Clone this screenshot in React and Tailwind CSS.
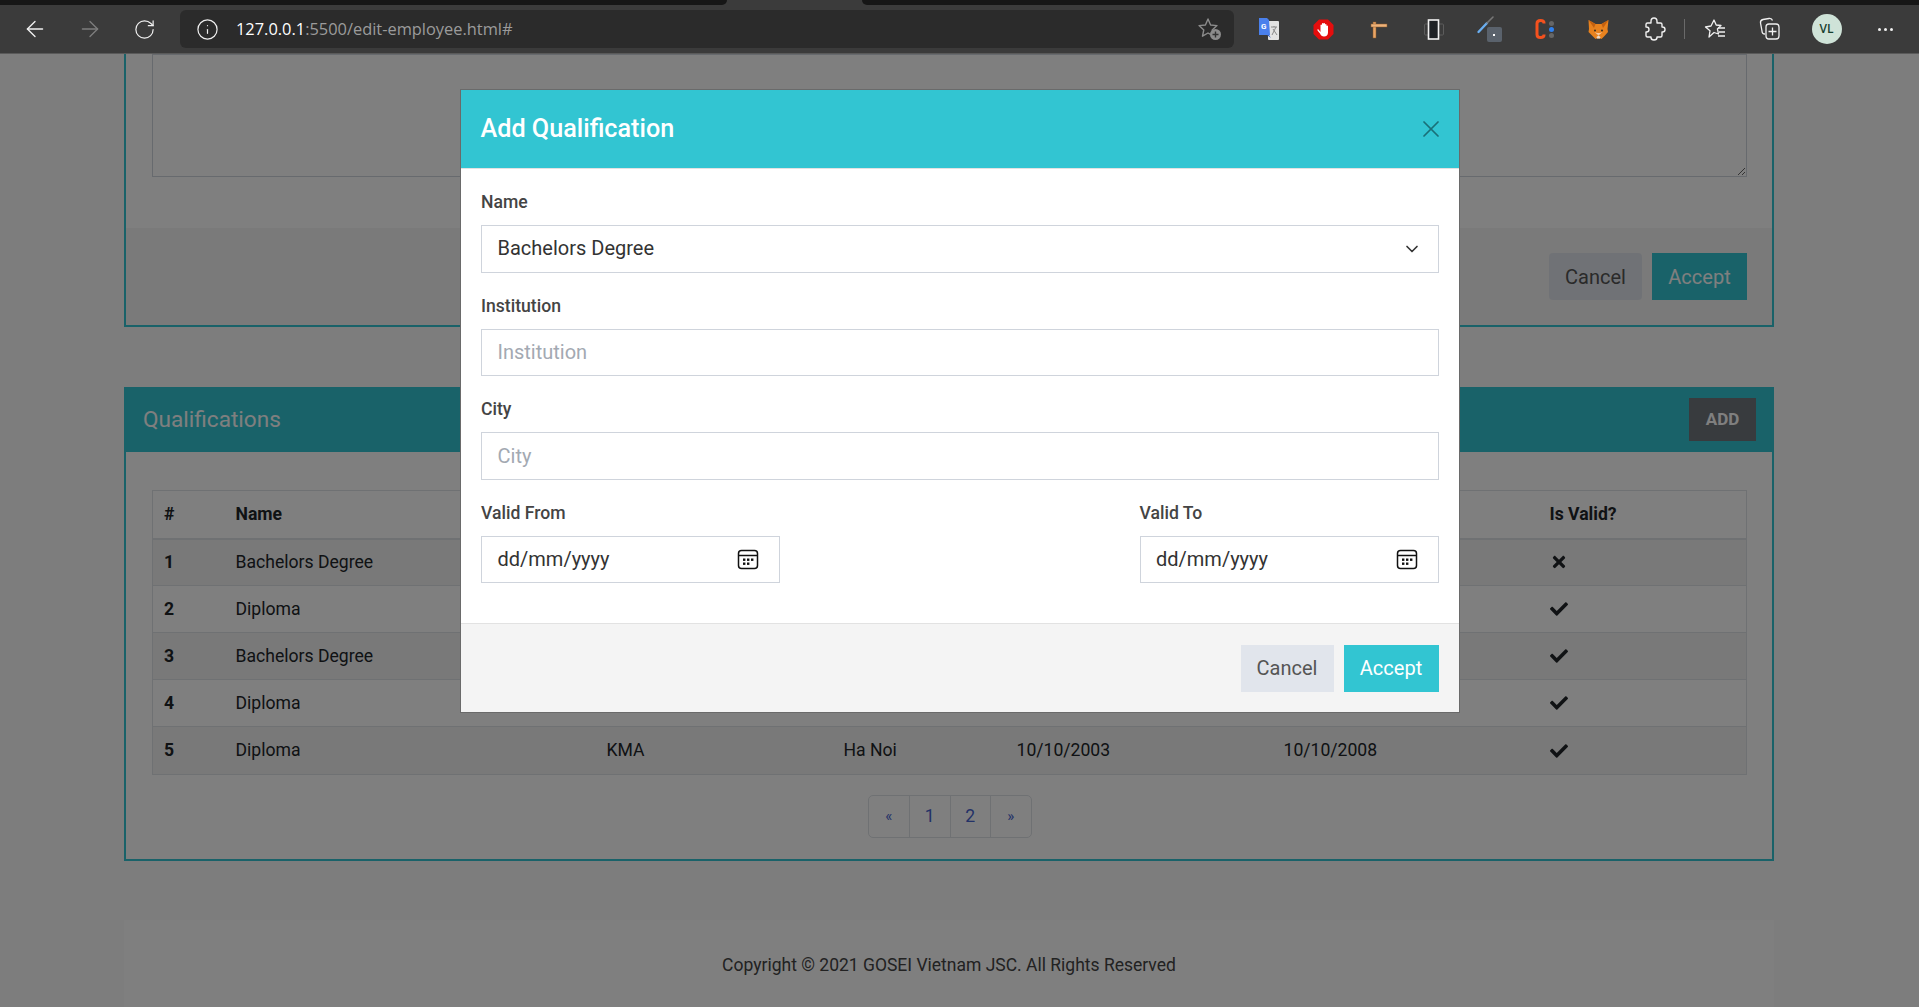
import React from 'react';
import { ArrowLeft, ArrowRight, ChevronDown, Info, RotateCw, X } from 'lucide-react';
import { FaCheck, FaTimes } from 'react-icons/fa';

// only the cells the dialog does not cover are filled in
const rows = [
  { id: 1, name: 'Bachelors Degree', valid: false },
  { id: 2, name: 'Diploma', valid: true },
  { id: 3, name: 'Bachelors Degree', valid: true },
  { id: 4, name: 'Diploma', valid: true },
  { id: 5, name: 'Diploma', inst: 'KMA', city: 'Ha Noi', from: '10/10/2003', to: '10/10/2008', valid: true },
];

function StarAdd() {
  return (
    <svg width="26" height="26" viewBox="0 0 26 26" fill="none" stroke="#8c8c8c" strokeWidth="1.4">
      <path d="M11 3l2.6 6 6.4.6-4.8 4.3 1.3 6.3L11 17l-5.5 3.2 1.3-6.3L2 9.6 8.4 9z" strokeLinejoin="round" />
      <circle cx="18.5" cy="18.5" r="5.5" fill="#8c8c8c" stroke="none" />
      <path d="M18.5 15.5v6M15.5 18.5h6" stroke="#333" strokeWidth="1.4" />
    </svg>
  );
}

function TranslateIcon() {
  return (
    <svg width="22" height="24" viewBox="0 0 22 24">
      <rect x="10" y="4" width="11" height="19" rx="1" fill="#e3e3e3" />
      <path d="M13 10h6M16 9v1M14 18l4-8M15 12l4 6" stroke="#8a8a8a" strokeWidth="1" fill="none" />
      <path d="M1 1h8l2 2 1 15H1z" fill="#4a80ec" />
      <path d="M11 18l2 3-4-3z" fill="#2d5cc0" />
      <text x="3" y="12" fontSize="8" fontWeight="700" fill="#fff" fontFamily="Roboto, sans-serif">G</text>
    </svg>
  );
}

function StopIcon() {
  return (
    <svg width="21" height="21" viewBox="0 0 21 21">
      <path d="M6 0.5h9l5.500 5.500v9L15 20.500H6L0.500 15V6z" fill="#e50d0d" />
      <path d="M5.500 10.500l2 2.500V6a.8.8 0 0 1 1.500 0V4.500a.8.8 0 0 1 1.500 0 .8.8 0 0 1 1.500 0V5.500a.8.8 0 0 1 1.500 0V7a.8.8 0 0 1 1.500 0v6.500c0 2.500-1.500 4-4 4-2 0-3.200-1-4-3L4.500 11.500c-.4-1 .5-1.600 1-1z" fill="#fff" />
    </svg>
  );
}

function SignIcon() {
  return (
    <svg width="18" height="20" viewBox="0 0 18 20">
      <rect x="3" y="3" width="3" height="16" fill="#e9a566" stroke="#8a5a2b" strokeWidth="0.5" />
      <rect x="1" y="5" width="16" height="3" fill="#eeb27a" stroke="#8a5a2b" strokeWidth="0.5" />
    </svg>
  );
}

function PhoneIcon() {
  return (
    <svg width="20" height="21" viewBox="0 0 20 21" fill="none">
      <rect x="0.500" y="5" width="19" height="11" rx="1" stroke="#5c5c5c" />
      <rect x="4.500" y="1" width="10" height="19" fill="#1e2125" stroke="#f2f2f2" strokeWidth="1.600" />
    </svg>
  );
}

function DropperIcon() {
  return (
    <div className="relative w-[28px] h-[28px]">
      <svg width="20" height="20" viewBox="0 0 20 20" className="absolute left-[1px] top-0">
        <path d="M2.500 17L11 8" stroke="#6aaef0" strokeWidth="2.400" strokeLinecap="round" />
        <path d="M11 8l6-6" stroke="#777" strokeWidth="1.600" strokeLinecap="round" />
      </svg>
      <div className="absolute left-[12px] top-[12px] w-[15px] h-[15px] rounded-[2px] bg-[#5a626c] flex items-center justify-center">
        <div className="w-[2px] h-[2px] bg-white" />
      </div>
    </div>
  );
}

function ColorPickIcon() {
  return (
    <div className="flex items-center gap-[3px]">
      <svg width="12" height="22" viewBox="0 0 12 22" fill="none">
        <path d="M10 5.500V5C10 3.300 8.700 2.500 6.500 2.500S3 3.500 3 5.500v11c0 2 1.200 3 3.500 3s3.500-.8 3.500-2.500v-.5" stroke="#f4511e" strokeWidth="3" />
      </svg>
      <div className="flex flex-col gap-[1px]">
        <div className="w-[5px] h-[5px] rounded-full bg-[#666]" />
        <div className="w-[5px] h-[5px] rounded-full bg-[#2f80ed]" />
        <div className="w-[5px] h-[5px] rounded-full bg-[#666]" />
      </div>
    </div>
  );
}

function FoxIcon() {
  return (
    <svg width="21" height="21" viewBox="0 0 21 21">
      <path d="M.5 1l7 4h6l7-4-1 9 .5 3-3.500 4-3 3-1-.5h-4l-1 .5-3-3L.5 13l.5-3z" fill="#e8821e" />
      <path d="M.5 1l7 4-1.500 4zM20.500 1l-7 4 1.500 4z" fill="#c4600f" />
      <path d="M6.500 13l4 3.500 4-3.500-2.500 1H9z" fill="#f6c9a0" />
      <path d="M8.500 18l2-1.500 2 1.500-.5 1.500H9z" fill="#e8d8c8" />
      <circle cx="7" cy="11.500" r="0.900" fill="#222" />
      <circle cx="14" cy="11.500" r="0.900" fill="#222" />
    </svg>
  );
}

function ExtensionsIcon() {
  return (
    <svg width="24" height="26" viewBox="0 0 24 26" fill="none" stroke="#f0f0f0" strokeWidth="1.400" strokeLinejoin="round">
      <path d="M9 5.500C9 3.500 10.200 2 12 2s3 1.500 3 3.500V7h3.500c.8 0 1.500.7 1.500 1.500V11h.5c1.500 0 2.500 1 2.500 2.500S22 16 20.500 16H20v3.500c0 .8-.7 1.500-1.500 1.500H15v.5c0 1.500-1.200 2.500-3 2.500s-3-1-3-2.500V21H5.500C4.700 21 4 20.300 4 19.500V16h.5C6 16 7 15 7 13.500S6 11 4.500 11H4V8.500C4 7.700 4.700 7 5.500 7H9z" />
    </svg>
  );
}

function FavoritesIcon() {
  return (
    <svg width="22" height="22" viewBox="0 0 22 22" fill="none" stroke="#f0f0f0" strokeWidth="1.300" strokeLinejoin="round">
      <path d="M10 2l2.200 5 4.800.5-3.600 3.400 1.100 5.100L10 14.500 5 19l1-6.200L1.500 9l5.500-1z" />
      <path d="M14 10h7M15 14h6M14 18h7" />
    </svg>
  );
}

function CollectionsIcon() {
  return (
    <svg width="22" height="24" viewBox="0 0 22 24" fill="none" stroke="#f0f0f0" strokeWidth="1.300">
      <path d="M6 17c-2 0-3-1-3-3L1.500 6c-.3-2 .7-3 2.500-3.500L10 1.500c2-.3 3 .5 3.500 2" />
      <rect x="7" y="7" width="13" height="15" rx="3" />
      <path d="M13.500 10.500v8M9.500 14.500h8" />
    </svg>
  );
}

function CalendarIcon() {
  return (
    <svg width="22" height="22" viewBox="0 0 22 22" fill="none" stroke="#111" strokeWidth="1.500">
      <rect x="1.500" y="2.500" width="19" height="18" rx="3" />
      <path d="M1.500 7.500h19" />
      <g fill="#111" stroke="none">
        <rect x="6" y="10.500" width="2.400" height="2.400" />
        <rect x="10" y="10.500" width="2.400" height="2.400" />
        <rect x="14" y="10.500" width="2.400" height="2.400" />
        <rect x="6" y="14.500" width="2.400" height="2.400" />
        <rect x="10" y="14.500" width="2.400" height="2.400" />
      </g>
    </svg>
  );
}

function ToolbarSlot({ children, className = 'w-[55px]' }) {
  return <div className={`flex items-center justify-center ${className}`}>{children}</div>;
}

function BrowserBar() {
  return (
    <div className="h-[54px] shrink-0 bg-[#3b3b3b] border-b border-[#5a5a5a] relative z-10">
      <div className="flex h-[5px]">
        <div className="w-[727px] bg-[#161616] rounded-br-md" />
        <div className="w-[135px]" />
        <div className="flex-1 bg-[#161616] rounded-bl-md" />
      </div>
      <div className="flex items-center h-[48px] pl-[7px]">
        <ToolbarSlot><ArrowLeft size={26} strokeWidth={1.25} color="#f0f0f0" /></ToolbarSlot>
        <ToolbarSlot><ArrowRight size={26} strokeWidth={1.25} color="#7d7d7d" /></ToolbarSlot>
        <ToolbarSlot><RotateCw size={23} strokeWidth={1.25} color="#f0f0f0" /></ToolbarSlot>
        <div className="ml-[8px] w-[1054px] h-[38px] bg-[#2b2b2b] rounded-md flex items-center pl-[16px] pr-[11px] font-['Open_Sans',sans-serif] text-[16.4px]">
          <Info size={23} strokeWidth={1.25} color="#f0f0f0" />
          <span className="ml-[17px] text-white">127.0.0.1</span>
          <span className="text-[#9b9b9b]">:5500/edit-employee.html#</span>
          <div className="ml-auto"><StarAdd /></div>
        </div>
        <div className="flex items-center ml-[7px]">
          <ToolbarSlot><TranslateIcon /></ToolbarSlot>
          <ToolbarSlot><StopIcon /></ToolbarSlot>
          <ToolbarSlot><SignIcon /></ToolbarSlot>
          <ToolbarSlot><PhoneIcon /></ToolbarSlot>
          <ToolbarSlot><DropperIcon /></ToolbarSlot>
          <ToolbarSlot><ColorPickIcon /></ToolbarSlot>
          <ToolbarSlot><FoxIcon /></ToolbarSlot>
          <ToolbarSlot><ExtensionsIcon /></ToolbarSlot>
          <div className="w-px h-[20px] bg-[#6a6a6a] ml-[3px]" />
          <ToolbarSlot className="w-[59px]"><FavoritesIcon /></ToolbarSlot>
          <ToolbarSlot className="w-[52px]"><CollectionsIcon /></ToolbarSlot>
          <ToolbarSlot className="w-[61px]">
            <div className="w-[30px] h-[30px] rounded-full bg-[#cfe3d8] flex items-center justify-center font-['Open_Sans',sans-serif] text-[12px] font-semibold text-[#17402f]">VL</div>
          </ToolbarSlot>
          <ToolbarSlot className="w-[56px]">
            <div className="flex gap-[3px]">
              <div className="w-[3px] h-[3px] rounded-full bg-[#f0f0f0]" />
              <div className="w-[3px] h-[3px] rounded-full bg-[#f0f0f0]" />
              <div className="w-[3px] h-[3px] rounded-full bg-[#f0f0f0]" />
            </div>
          </ToolbarSlot>
        </div>
      </div>
    </div>
  );
}

function QualificationsTable() {
  return (
    <table className="w-full table-fixed border border-[#dee2e6] border-collapse text-[#212529]">
      <colgroup>
        <col className="w-[72px]" />
        <col className="w-[370px]" />
        <col className="w-[238px]" />
        <col className="w-[172px]" />
        <col className="w-[267px]" />
        <col className="w-[266px]" />
        <col />
      </colgroup>
      <thead>
        <tr className="h-[48px] border-b-2 border-[#dee2e6] text-left">
          <th className="pl-[11px] font-bold">#</th>
          <th className="pl-[11px] font-bold">Name</th>
          <th />
          <th />
          <th />
          <th />
          <th className="pl-[12px] font-bold">Is Valid?</th>
        </tr>
      </thead>
      <tbody>
        {rows.map((r) => (
          <tr key={r.id} className={`border-t border-[#dee2e6] ${r.id === 5 ? 'h-[48px]' : 'h-[47px]'} ${r.id % 2 === 1 ? 'bg-[#f2f2f2]' : ''}`}>
            <td className="pl-[11px] font-bold">{r.id}</td>
            <td className="pl-[11px]">{r.name}</td>
            <td className="pl-[12px]">{r.inst}</td>
            <td className="pl-[11px]">{r.city}</td>
            <td className="pl-[12px]">{r.from}</td>
            <td className="pl-[12px]">{r.to}</td>
            <td className="pl-[12px]">{r.valid ? <FaCheck size={18} /> : <FaTimes size={18} />}</td>
          </tr>
        ))}
      </tbody>
    </table>
  );
}

function Pagination() {
  const items = ['«', '1', '2', '»'];
  return (
    <div className="flex justify-center mt-[20px]">
      <div className="flex h-[43px] border border-[#dee2e6] rounded-[5px] text-[#4664cf]">
        {items.map((t, i) => (
          <div key={t} className={`w-[40.5px] flex items-center justify-center ${i > 0 ? 'border-l border-[#dee2e6]' : ''} ${i === 0 || i === 3 ? 'text-[15px]' : ''}`}>
            {t}
          </div>
        ))}
      </div>
    </div>
  );
}

function Field({ label, children }) {
  return (
    <div className="mb-[20px]">
      <div className="h-[26px] leading-[26px] mb-[10px] font-medium text-[#444]">{label}</div>
      {children}
    </div>
  );
}

const boxClass = 'w-full h-[47.5px] border border-[#cfd4dc] bg-white pl-[15.5px] pr-[16px] text-[20px] text-[#333] outline-none placeholder:text-[#a3a9b2]';

function DateBox() {
  return (
    <div className={`${boxClass} flex items-center justify-between pr-[20px]`}>
      <span>dd/mm/yyyy</span>
      <CalendarIcon />
    </div>
  );
}

function QualificationModal() {
  return (
    <div className="w-[1000px] h-[624px] bg-white border border-[#6a6a6a] flex flex-col">
      <div className="h-[79px] shrink-0 bg-[#32c5d2] border-b border-[#e2e2e2] flex items-center justify-between pl-[20px] pr-[14px]">
        <div className="text-[25.2px] font-medium text-white">Add Qualification</div>
        <X size={28} strokeWidth={1.5} color="#1a6f78" />
      </div>
      <div className="flex-1 pl-[20.5px] pr-[20px] pt-[20px]">
        <Field label="Name">
          <div className={`${boxClass} flex items-center justify-between pr-[14px]`}>
            <span className="-mt-[1px]">Bachelors Degree</span>
            <ChevronDown size={20} strokeWidth={2} color="#333" />
          </div>
        </Field>
        <Field label="Institution">
          <input readOnly placeholder="Institution" className={boxClass} />
        </Field>
        <Field label="City">
          <input readOnly placeholder="City" className={boxClass} />
        </Field>
        <div className="flex justify-between">
          <div className="w-[299px]"><Field label="Valid From"><DateBox /></Field></div>
          <div className="w-[299px]"><Field label="Valid To"><DateBox /></Field></div>
        </div>
      </div>
      <div className="h-[89px] shrink-0 bg-[#f4f4f4] border-t border-[#e2e2e2] flex items-center justify-end gap-[10px] px-[20px] text-[20px]">
        <button className="w-[93px] h-[47px] bg-[#e1e5ec] text-[#555]">Cancel</button>
        <button className="w-[95px] h-[47px] bg-[#32c5d2] text-white">Accept</button>
      </div>
    </div>
  );
}

export default function App() {
  return (
    <div className="h-screen overflow-hidden flex flex-col bg-[#fafafa] font-['Roboto',sans-serif] text-[17.6px]">
      <BrowserBar />
      <div className="relative flex-1 overflow-hidden">
        <div className="px-[124px] w-[1898px]">
          {/* employee details panel, scrolled past */}
          <div className="bg-white border-x-2 border-b-2 border-[#32c5d2]">
            <div className="pl-[26px] pr-[25px] pb-[51px]">
              <textarea readOnly className="block w-full h-[123px] border border-[#cfd4dc] bg-white outline-none" />
            </div>
            <div className="h-[97px] bg-[#f4f4f4] flex items-center justify-end gap-[10px] pr-[25px] text-[20px]">
              <button className="w-[93px] h-[47px] rounded-[4px] bg-[#e1e5ec] text-[#555]">Cancel</button>
              <button className="w-[95px] h-[47px] bg-[#32c5d2] text-white">Accept</button>
            </div>
          </div>

          <div className="mt-[60px] bg-white">
            <div className="h-[65px] bg-[#32c5d2] flex items-center justify-between pl-[19px] pr-[18px]">
              <div className="text-[22.6px] text-white">Qualifications</div>
              <button className="w-[67px] h-[43px] bg-[#71767d] text-white font-bold text-[17px]">ADD</button>
            </div>
            <div className="border-x-2 border-b-2 border-[#32c5d2] pl-[26px] pr-[25px] pt-[38px] pb-[21px]">
              <QualificationsTable />
              <Pagination />
            </div>
          </div>

          <div className="mt-[59px] h-[90px] bg-white flex items-center justify-center text-[17.5px] text-[#444]">
            Copyright © 2021 GOSEI Vietnam JSC. All Rights Reserved
          </div>
        </div>

        {/* modal backdrop */}
        <div className="absolute inset-0 bg-black/50 flex justify-center items-start pt-[35px]">
          <QualificationModal />
        </div>
      </div>
    </div>
  );
}
